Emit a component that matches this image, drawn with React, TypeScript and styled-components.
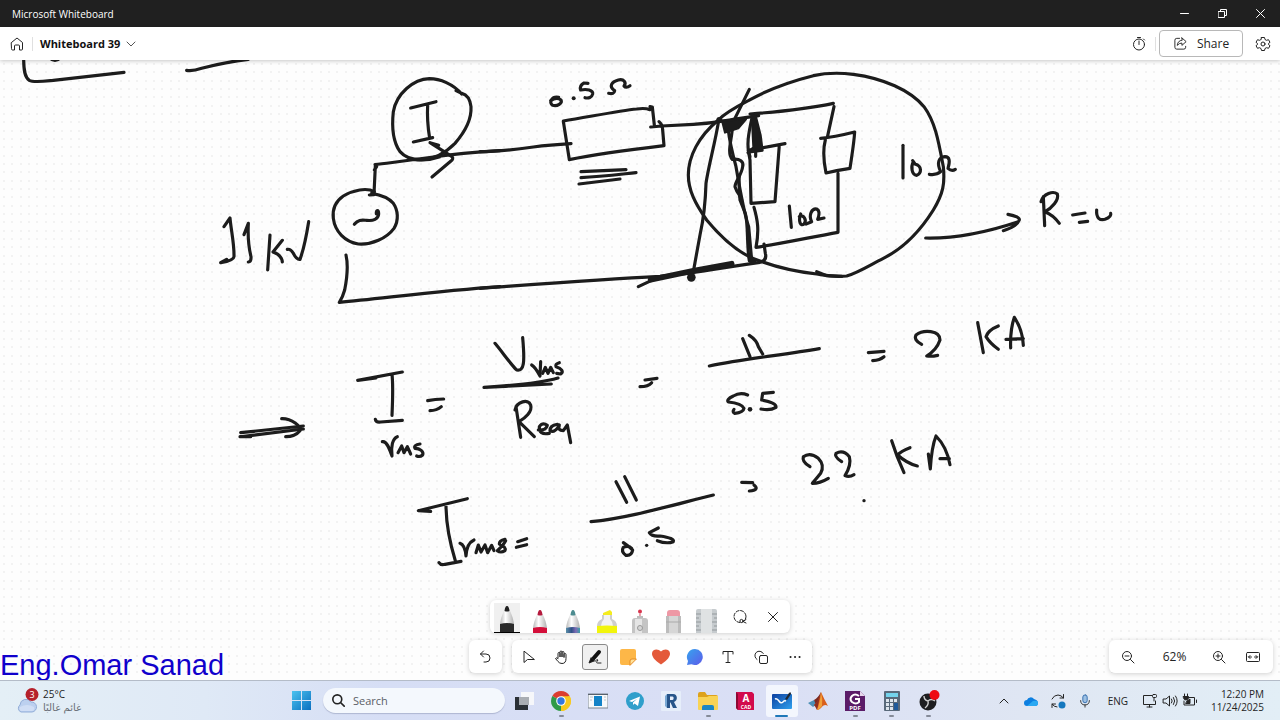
import React from "react";
import styled, { createGlobalStyle } from "styled-components";

const Global = createGlobalStyle`
  * { box-sizing: border-box; }
  body { margin: 0; font-family: "Open Sans", "Noto Sans", sans-serif; color: #242424; }
  button { font: inherit; color: inherit; border: 0; padding: 0; background: transparent; cursor: pointer; }
`;

const Page = styled.div`
  display: flex;
  flex-direction: column;
  min-height: 100vh;
  background: #fdfdfd;
`;

const TitleBar = styled.header`
  display: flex;
  align-items: center;
  justify-content: space-between;
  height: 27px;
  padding: 0 1px 0 12px;
  background: #202020;
  color: #fff;
  font-size: 10px;
`;

const WindowControls = styled.div`
  display: flex;
`;

const WindowButton = styled.button`
  display: grid;
  place-items: center;
  width: 38px;
  height: 27px;
`;

const AppBar = styled.nav`
  position: relative;
  display: flex;
  align-items: center;
  justify-content: space-between;
  height: 33px;
  padding: 0 9px;
  background: #fff;
  box-shadow: 0 1px 4px rgba(0, 0, 0, 0.22);
  z-index: 2;
`;

const BarGroup = styled.div<{ $gap: number }>`
  display: flex;
  align-items: center;
  gap: ${(p) => p.$gap}px;
`;

const IconButton = styled.button`
  display: grid;
  place-items: center;
  width: 16px;
  height: 24px;
`;

const Divider = styled.span`
  width: 1px;
  height: 14px;
  background: #e0e0e0;
`;

const BoardName = styled.button`
  display: flex;
  align-items: center;
  gap: 6px;
  font-size: 11px;
  font-weight: 700;
  color: #111;
`;

const ShareButton = styled.button`
  display: flex;
  align-items: center;
  justify-content: center;
  gap: 9px;
  width: 84px;
  height: 27px;
  border: 1px solid #b8b8b8;
  border-radius: 4px;
  font-size: 12px;
`;

const Board = styled.main`
  position: relative;
  display: flex;
  flex: 1;
  flex-direction: column;
  justify-content: flex-end;
  min-height: 400px;
  overflow: hidden;
`;

const Canvas = styled.svg`
  position: absolute;
  inset: 0;
  width: 100%;
  height: 100%;
`;

const Dock = styled.div`
  position: relative;
  display: grid;
  grid-template-columns: 1fr auto 1fr;
  align-items: end;
  padding-bottom: 7px;
`;

const Watermark = styled.div`
  align-self: end;
  font-family: "Liberation Sans", Arial, sans-serif;
  font-size: 29px;
  line-height: 30px;
  margin-bottom: -7px;
  color: #1000cc;
  white-space: nowrap;
`;

const ToolStack = styled.div`
  display: flex;
  flex-direction: column;
  align-items: center;
  gap: 7px;
`;

const ToolLine = styled.div`
  display: flex;
  gap: 10px;
`;

const Panel = styled.div<{ $width: number; $slots: number }>`
  display: grid;
  grid-template-columns: repeat(${(p) => p.$slots}, 1fr);
  width: ${(p) => p.$width}px;
  height: 33px;
  background: #fff;
  border-radius: 6px;
  box-shadow: 0 1px 5px rgba(0, 0, 0, 0.18);
`;

const ToolButton = styled.button<{ $active?: boolean }>`
  display: grid;
  place-items: center;
  place-self: center;
  width: 26px;
  height: 26px;
  border: 1px solid ${(p) => (p.$active ? "#8a8a8a" : "transparent")};
  border-radius: 3px;
  background: ${(p) => (p.$active ? "#f0f0f0" : "transparent")};
`;

const PenButton = styled.button<{ $active?: boolean }>`
  display: grid;
  place-items: end center;
  place-self: end center;
  width: 26px;
  height: 30px;
  background: ${(p) => (p.$active ? "#f0f0f0" : "transparent")};
  border-bottom: ${(p) => (p.$active ? "1px solid #000" : "0")};
`;

const ZoomPanel = styled.div`
  display: grid;
  grid-template-columns: 38px 1fr 34px 34px;
  align-items: center;
  justify-items: center;
  justify-self: end;
  width: 164px;
  height: 33px;
  margin-right: 7px;
  padding-right: 3px;
  background: #fff;
  border-radius: 6px;
  box-shadow: 0 1px 5px rgba(0, 0, 0, 0.18);
  font-size: 12px;
`;

const Taskbar = styled.footer`
  display: flex;
  align-items: center;
  height: 40px;
  border-top: 1px solid #b4bcc8;
  background: linear-gradient(90deg, #e4eff6 0%, #dfe9f6 16%, #d6def5 30%, #dadff5 60%, #dfe6f3 80%, #e2eef6 100%);
`;

const Weather = styled.button`
  display: flex;
  align-items: center;
  gap: 4px;
  flex: 0 0 283px;
  padding-left: 16px;
  text-align: left;
`;

const TwoLines = styled.span<{ $end?: boolean }>`
  display: flex;
  flex-direction: column;
  align-items: ${(p) => (p.$end ? "flex-end" : "flex-start")};
  font-size: 10px;
  line-height: 13px;
  white-space: nowrap;
`;

const Arabic = styled.span`
  font-family: "DejaVu Sans", sans-serif;
  color: #666c74;
`;

const StartButton = styled.button`
  display: grid;
  place-items: center;
  width: 37px;
  height: 32px;
  margin-right: 3px;
`;

const SearchBox = styled.label`
  display: flex;
  align-items: center;
  gap: 8px;
  width: 182px;
  height: 25px;
  padding: 0 9px;
  border-radius: 13px;
  background: #f4f8fd;
  box-shadow: 0 1px 1px rgba(80, 90, 130, 0.3);
`;

const SearchInput = styled.input`
  flex: 1;
  min-width: 0;
  padding: 0;
  border: 0;
  outline: 0;
  background: transparent;
  font: 11px "Open Sans", sans-serif;
  &::placeholder { color: #5a5e66; opacity: 1; }
`;

const Apps = styled.div`
  display: grid;
  grid-template-columns: repeat(12, 1fr);
  width: 441px;
  margin-left: 1px;
`;

const AppButton = styled.button<{ $state?: "open" | "focused" }>`
  position: relative;
  display: grid;
  place-items: center;
  place-self: center;
  width: 32px;
  height: 32px;
  border-radius: 3px;
  background: ${(p) => (p.$state === "focused" ? "#f3f6fd" : "transparent")};
  &::after {
    content: "";
    position: absolute;
    bottom: 0;
    width: ${(p) => (p.$state === "focused" ? 13 : 5)}px;
    height: 2px;
    border-radius: 1px;
    background: ${(p) => (p.$state === "focused" ? "#1f78b8" : p.$state ? "#858b98" : "transparent")};
  }
`;

const Tray = styled.div`
  display: flex;
  align-items: center;
  margin-left: auto;
  padding-right: 16px;
`;

const TrayButton = styled.button`
  display: grid;
  place-items: center;
  width: 27px;
  height: 30px;
`;

const Language = styled.button`
  width: 34px;
  margin: 0 7px 0 2px;
  font-size: 10px;
`;

const SystemStatus = styled.button`
  display: flex;
  align-items: center;
  gap: 4px;
  margin-right: 13px;
`;

/* Ink strokes, in sheets of three units to a pixel; x and y give the sheet's corner on the window. */
type Sheet = { x: number; y: number; ink: string[]; solid?: string[]; heavy?: string[]; dots?: [number, number, number][] };

const sheets: Sheet[] = [
  {
    x: 0,
    y: 0,
    ink: [
      "M71 176C71 210 74 232 88 241C100 248 130 244 160 241L372 217",
      "M156 179Q165 183 174 179",
      "M560 211C575 214 590 210 605 205C650 193 690 184 745 178",
    ],
  },
  {
    x: 200,
    y: 60,
    ink: [
      "M785 102C760 72 720 56 688 56C640 58 590 100 580 155C574 210 582 250 600 275C615 292 640 300 665 299C700 298 735 280 765 250C800 210 815 175 813 140C810 115 800 104 785 100L768 92",
      "M632 144L708 125M683 135C681 170 684 205 689 235M640 246L698 233",
      "M716 256L690 248L756 290Q762 296 752 304L696 351",
      "M525 314C570 308 640 300 700 291C760 282 830 276 900 272M640 298Q680 304 720 290",
      "M526 318L522 402M508 405L522 404M523 330L530 320",
      "M523 395C500 382 460 390 430 408C405 425 397 450 400 475C405 515 435 545 475 552C515 555 560 535 582 505C597 480 594 450 580 430C565 412 545 405 515 400",
      "M463 493C475 478 485 480 500 481C520 483 535 478 536 462C536 448 528 448 529 462",
      "M72 500L90 474C93 510 103 550 102 590Q101 602 62 608L80 598",
      "M132 524L145 490C143 530 148 570 153 590Q154 605 145 606",
      "M210 525L203 630M247 541L219 576Q245 585 247 606",
      "M262 568Q272 566 280 580Q290 600 300 598Q314 560 326 485",
      "M438 585C446 620 440 660 434 690Q428 712 418 727C550 715 720 692 900 680",
    ],
  },
  {
    x: 480,
    y: 60,
    ink: [
      "M0 275C60 275 110 268 160 261C200 256 240 253 273 251",
      "M250 184L268 299M250 183C330 170 420 152 470 147Q495 143 510 149M510 140L517 141L523 195M512 201L545 198M537 185Q548 195 548 210L552 257C460 268 360 280 268 299",
      "M545 198L640 193C700 190 720 184 760 178L836 167",
      "M236 112C215 108 205 128 218 136C232 140 248 130 243 120Q230 110 212 122",
      "M324 70L312 69Q298 76 302 90C320 86 340 90 338 102C336 112 325 116 315 113",
      "M386 100Q402 104 404 92C385 80 395 65 415 60C432 56 440 68 432 78Q438 86 450 77",
      "M303 335L438 329M303 353C360 350 410 344 468 338M297 372L420 357",
      "M716 182C705 250 685 320 678 370C676 440 670 480 660 525L640 635",
      "M475 680L515 661M0 685C180 672 360 658 540 649C650 640 740 620 840 607Q862 600 856 580L852 552",
      "M808 88L745 215",
      "M745 210C748 240 760 290 768 320C780 390 792 460 806 500L815 600",
      "M757 205C755 240 740 280 757 298C780 295 792 305 788 320C785 345 765 365 765 380Q770 395 778 405L785 420",
      "M778 345Q776 380 780 420L796 460C805 490 800 560 808 602L825 602",
    ],
    heavy: ["M512 659L640 632L755 611"],
    solid: ["M726 182L798 178L775 205L735 218Z"],
    dots: [[281, 115, 6], [634, 652, 13], [718, 180, 9], [814, 600, 9]],
  },
  {
    x: 670,
    y: 60,
    ink: [
      "M145 180C170 155 210 135 235 122C300 85 370 62 430 47C470 38 510 38 550 43C640 55 720 90 762 140C795 185 805 240 820 320C825 370 820 400 790 450C740 530 690 570 640 595C600 615 565 638 530 648C490 653 460 645 440 642C380 635 330 625 270 603C210 585 160 540 110 480C75 430 55 390 55 345C55 290 85 230 145 180",
      "M440 635L470 647L515 649",
      "M240 162C330 155 420 145 490 130M492 140L472 232M452 235C490 232 530 222 554 216C552 250 545 290 540 325Q505 330 468 339C460 300 458 270 466 240",
      "M504 340L504 517C420 532 340 550 258 562C268 510 263 480 252 442",
      "M235 272L240 300L243 430L315 425L328 255M235 271L345 251",
      "M248 165C235 220 228 260 240 290M257 275V289",
      "M699 256V354",
      "M730 305C722 320 725 345 740 346C755 340 757 318 735 312L728 302",
      "M778 343Q800 346 812 335C800 310 805 292 825 290C840 290 840 305 834 325Q845 335 856 328",
      "M358 438L364 502",
      "M392 462C384 485 392 500 402 492C412 480 400 462 388 470",
      "M408 492L425 485C415 465 425 445 440 447C450 452 448 465 443 478L462 474",
      "M767 534C850 536 940 520 1045 485M1014 463Q1050 470 1048 480Q1040 500 1000 512",
      "M1120 410L1124 497M1113 425C1120 400 1150 392 1162 402C1168 420 1145 445 1125 455Q1150 465 1168 490",
      "M1208 465Q1225 462 1245 459M1228 487L1253 484",
      "M1280 450C1278 475 1290 482 1305 478Q1325 470 1322 460",
    ],
    solid: ["M245 165L258 170L272 225L278 272L232 278L250 262Z"],
  },
  {
    x: 220,
    y: 310,
    ink: [
      "M62 368L250 348M66 380L250 357M60 380H92",
      "M185 326C215 325 245 350 240 362Q225 380 197 380",
      "M413 211L468 204M413 211L547 186M516 192C520 230 518 270 516 316M466 328Q468 338 482 336L547 331",
      "M623 272Q645 268 671 267M630 302Q650 302 664 290",
      "M487 395C500 392 508 415 516 438C512 410 518 385 532 380",
      "M534 428L545 408L552 428L562 410L572 432",
      "M600 402Q580 405 585 415C600 415 612 425 608 435Q600 442 590 438",
      "M825 100C850 130 870 160 890 180C912 184 915 160 908 83",
      "M935 165Q945 170 960 198L962 155",
      "M968 190L976 172L984 190L992 172L1000 188",
      "M1018 158Q1005 162 1008 170C1025 175 1032 185 1022 192L1010 190",
      "M792 232C860 228 950 222 1014 204M792 232L994 222",
      "M888 290L902 382M885 300C890 275 925 265 932 285C938 305 915 325 897 335L943 380",
      "M955 360Q978 362 982 346Q968 336 958 350Q956 376 988 370",
      "M1012 343Q990 346 990 362Q1002 370 1016 350",
      "M1018 345Q1012 362 1030 362L1042 345L1052 398",
      "M632 604L595 602L742 566M678 584C678 640 690 700 706 752M657 758Q662 766 675 763L723 754",
      "M720 700Q735 705 738 738Q740 700 762 690",
      "M768 728L775 705L783 726L795 705L803 728L815 706L822 722",
      "M855 688Q838 692 838 702Q860 712 855 722Q842 730 832 722Q850 705 857 692",
      "M893 695L920 686M889 712L920 704",
    ],
  },
  {
    x: 580,
    y: 310,
    ink: [
      "M195 210L231 205M180 230Q205 230 215 218",
      "M488 86L510 140M508 76Q530 90 535 110L548 132",
      "M388 168C500 145 610 135 718 116",
      "M503 255Q480 246 460 258Q438 268 445 276Q485 280 492 295Q490 308 464 310Q456 306 462 298",
      "M580 247L548 250L545 270Q590 278 588 292Q570 303 543 297",
      "M865 128L912 124M878 152Q900 150 912 140",
      "M1025 103Q1000 90 1008 75C1030 58 1080 60 1080 90Q1070 120 1040 138Q1055 140 1073 136",
      "M1193 38L1210 128M1255 48Q1225 60 1218 80Q1230 100 1255 118",
      "M1292 114Q1290 60 1303 22Q1328 60 1330 106M1278 88L1330 86",
      "M108 515L140 577M134 500L169 570",
      "M33 635C140 625 260 590 400 555",
      "M485 517L518 518M522 525Q540 540 508 543",
      "M690 470Q665 455 670 440Q690 425 715 445Q735 465 722 490Q710 505 697 520Q720 520 745 505",
      "M785 455Q762 440 768 430Q790 418 808 440Q815 465 795 497Q808 503 822 494",
      "M935 392Q950 440 972 488M990 413Q960 425 953 435Q980 460 1012 468",
      "M1045 432L1051 477Q1055 410 1068 378Q1100 410 1110 464M1080 446H1108",
      "M130 698Q150 712 158 720Q155 738 138 736Q122 725 130 712Q145 705 155 715",
      "M235 654L208 668Q215 680 240 678Q285 685 280 695Q260 703 232 692",
    ],
    dots: [[510, 298, 7], [852, 572, 5], [200, 706, 5]],
  },
];

const gridSteps = [4, 12, 21];

const Ink = () => (
  <Canvas role="img" aria-label="Short-circuit current worked example">
    <defs>
      <pattern id="dots" width="25" height="25" patternUnits="userSpaceOnUse">
        {gridSteps.map((x) => gridSteps.map((y) => <circle key={`${x}-${y}`} cx={x} cy={y} r="0.8" fill="#e3e3e3" />))}
      </pattern>
    </defs>
    <rect width="100%" height="100%" fill="url(#dots)" />
    <g transform="translate(0 -60)" stroke="#1c1c1c" fill="none" strokeLinecap="round" strokeLinejoin="round">
      {sheets.map((s) => (
        <g key={`${s.x}-${s.y}`} transform={`translate(${s.x} ${s.y}) scale(0.33333)`}>
          {s.ink.map((d) => <path key={d} d={d} strokeWidth="9.5" />)}
          {s.heavy?.map((d) => <path key={d} d={d} strokeWidth="17" />)}
          {s.solid?.map((d) => <path key={d} d={d} fill="#1c1c1c" strokeWidth="6" />)}
          {s.dots?.map(([x, y, r]) => <circle key={x} cx={x} cy={y} r={r} fill="#1c1c1c" stroke="none" />)}
        </g>
      ))}
    </g>
  </Canvas>
);

type LineProps = { size?: number; w?: number; box?: number; children: React.ReactNode };
const Line = ({ size = 16, w = 1, box = 16, children }: LineProps) => (
  <svg width={size} height={size} viewBox={`0 0 ${box} ${box}`} fill="none" stroke="currentColor" strokeWidth={w} strokeLinecap="round" strokeLinejoin="round" aria-hidden="true">
    {children}
  </svg>
);

const Pen = ({ tip, body, id, height = 23 }: { tip: string; body: string; id: string; height?: number }) => (
  <svg width="18" height={height} viewBox={`0 0 18 ${height}`} aria-hidden="true">
    <defs>
      <linearGradient id={id}>
        <stop offset="0" stopColor="#b8b8b8" />
        <stop offset="0.4" stopColor="#fff" />
        <stop offset="1" stopColor="#b0b0b0" />
      </linearGradient>
      <linearGradient id="galaxy">
        <stop offset="0" stopColor="#5b8fa8" />
        <stop offset="0.4" stopColor="#2f4f86" />
        <stop offset="0.7" stopColor="#7e6bb5" />
        <stop offset="1" stopColor="#39a0a8" />
      </linearGradient>
    </defs>
    <path d="M2 26V18C3 11 5 7 7 3H11C13 7 15 11 16 18V26Z" fill={`url(#${id})`} />
    <path d="M6.500 5C7 1 8 0 9 0S11 1 11.500 5Q9 6 6.500 5Z" fill={tip} />
    <path d="M2 18Q9 16 16 18V26H2Z" fill={body} />
  </svg>
);

const Highlighter = () => (
  <svg width="22" height="23" viewBox="0 0 22 23" aria-hidden="true">
    <path d="M7 6V3L14 0L16 2V6Z" fill="#f4ec1e" />
    <path d="M6 5H16V9Q21 11 21 16V23H1V16Q1 11 6 9Z" fill="#cecece" />
    <path d="M8 5H14V9Q17 12 17 16H5Q5 12 8 9Z" fill="#f3f3f3" />
    <path d="M1 16Q11 15 21 16V23H1Z" fill="#f2f50c" />
  </svg>
);

const Laser = () => (
  <svg width="18" height="24" viewBox="0 0 18 24" aria-hidden="true">
    <circle cx="9" cy="2.500" r="2" fill="#d8364f" />
    <path d="M8 4H10V8H8Z" fill="#eba4ae" />
    <path d="M6 7H12V11H6Z" fill="#bdbdbd" />
    <path d="M1 24V12Q1 9 4 9H14Q17 9 17 12V24Z" fill="#c4c4c4" />
    <path d="M4 10H11V24H4Z" fill="#e5e5e5" />
    <circle cx="9" cy="19" r="2.500" fill="#d5d5d5" stroke="#999" />
  </svg>
);

const Eraser = () => (
  <svg width="16" height="23" viewBox="0 0 16 23" aria-hidden="true">
    <path d="M2 8V3Q2 0 5 0H12Q15 0 15 3V8Z" fill="#ee98a5" />
    <path d="M1 6H16V23H1Z" fill="#bcbcbc" />
    <path d="M4 6H13V23H4Z" fill="#d6d6d6" />
    <path d="M1 12H16" stroke="#aaa" />
  </svg>
);

const Ruler = () => (
  <svg width="23" height="24" viewBox="0 0 23 24" aria-hidden="true">
    <path d="M1 24V2Q1 0 3 0H20Q22 0 22 2V24Z" fill="#c6cbce" />
    <path d="M6 0H17V24H6Z" fill="#dfe2e3" />
    <path d="M1 5H6M1 9H4M1 13H6M1 17H4M1 21H6M22 5H17M22 9H19M22 13H17M22 17H19M22 21H17" stroke="#92989b" />
  </svg>
);

const CloudWeather = () => (
  <svg width="23" height="26" viewBox="0 0 23 26" aria-hidden="true">
    <path d="M5 24A4 4 0 0 1 4 17A6 6 0 0 1 15 14A5 5 0 0 1 16 24Z" fill="#bcd0ef" stroke="#93aed8" />
    <path d="M5 23A3 3 0 0 1 4 19Q11 15 18 19Q19 22 16 23Z" fill="#d0def5" />
    <circle cx="16" cy="6.500" r="6.500" fill="#b5202a" />
    <text x="16" y="10" textAnchor="middle" fontSize="9" fill="#fff">3</text>
  </svg>
);

const Icon20 = ({ children }: { children: React.ReactNode }) => (
  <svg width="20" height="20" viewBox="0 0 20 20" aria-hidden="true">{children}</svg>
);

const TaskView = () => (
  <Icon20>
    <path d="M7 1H20V14H7Z" fill="#f6f7fa" />
    <path d="M1 6H14V19H1Z" fill="#2b3036" />
    <path d="M5 6H15V14H5Z" fill="#a9adb3" />
  </Icon20>
);

const Chrome = () => (
  <Icon20>
    <path d="M10 10L1.340 5A10 10 0 0 1 18.660 5Z" fill="#dc3d30" />
    <path d="M10 10L18.660 5A10 10 0 0 1 10 20Z" fill="#f8c91e" />
    <path d="M10 10L10 20A10 10 0 0 1 1.340 5Z" fill="#2f9a48" />
    <path d="M10 5.200H18.700A10 10 0 0 1 10 20L14.200 12.400Z" fill="#f8c91e" />
    <circle cx="10" cy="10" r="4.800" fill="#fff" />
    <circle cx="10" cy="10" r="3.700" fill="#3478df" />
  </Icon20>
);

const Gadget = () => (
  <Icon20>
    <path d="M0 3H20V17H0Z" fill="#f7f9fb" stroke="#7a8591" />
    <path d="M0 3H20V4H0Z" fill="#59626d" />
    <path d="M6 5H14V15H6Z" fill="#1483c7" />
    <path d="M2 6H5M2 9H4M16 6H18M16 9H18" stroke="#bcc4cc" />
  </Icon20>
);

const Telegram = () => (
  <Icon20>
    <circle cx="10" cy="10" r="9" fill="#2f9fcb" />
    <path d="M4 10L15 5.500L13 15L9.500 12.500L8 14V11.500L12 8L7 11Z" fill="#fff" />
  </Icon20>
);

const Revit = () => (
  <Icon20>
    <rect width="20" height="20" rx="1" fill="#e6eefa" />
    <path d="M6 3H12C17 3 17 10 13 11L16 17H12L9.500 11.500H9V17H6ZM9 5.500V9H11.500C13 9 13 5.500 11.500 5.500Z" fill="#27558a" fillRule="evenodd" />
    <path d="M4 5L6 3V17L4 15Z" fill="#79a9d4" />
  </Icon20>
);

const Folder = () => (
  <svg width="22" height="20" viewBox="0 0 22 20" aria-hidden="true">
    <path d="M1 3Q1 1 3 1H8L10 4H19Q21 4 21 6V18H1Z" fill="#dda21c" />
    <path d="M1 6H10L12 5H21V18Q21 19 20 19H2Q1 19 1 18Z" fill="#f8d355" />
    <path d="M5 19V16Q5 14 7 14H15Q17 14 17 16V19Z" fill="#1a86c4" />
  </svg>
);

const AutoCad = () => (
  <Icon20>
    <path d="M1 1H17L19 3V19H3L1 17Z" fill="#d20b4c" />
    <path d="M1 1L3 3V19L1 17Z" fill="#8c0833" />
    <text x="11" y="11" textAnchor="middle" fontSize="10" fontWeight="700" fill="#fff">A</text>
    <text x="11" y="18" textAnchor="middle" fontSize="5" fontWeight="700" fill="#fff">CAD</text>
  </Icon20>
);

const WhiteboardApp = () => (
  <svg width="22" height="20" viewBox="0 0 22 20" aria-hidden="true">
    <defs>
      <linearGradient id="wb" x2="1" y2="1">
        <stop offset="0" stopColor="#0c3f9f" />
        <stop offset="1" stopColor="#2fa0ee" />
      </linearGradient>
    </defs>
    <rect x="1" y="3" width="20" height="15" rx="1" fill="url(#wb)" />
    <path d="M4 8Q6 7 8 10T12 11Q13 9 15 10" stroke="#fff" strokeWidth="1.500" fill="none" />
    <path d="M14 8L18 2Q20 0 20 3L16 9Z" fill="#202833" />
  </svg>
);

const Matlab = () => (
  <Icon20>
    <path d="M0 12L6 9L9 13L5 16Z" fill="#4c8fb5" />
    <path d="M6 9Q10 7 13 1L11 12L8 14Z" fill="#7a2a22" />
    <path d="M13 1Q16 8 20 15Q16 12 13 17Q11 19 9 19Q9 15 6 14Q10 12 13 1Z" fill="#d95f1c" />
    <path d="M13 1Q11 10 9 19Q7 15 6 14Q10 11 13 1Z" fill="#8f2f20" />
    <path d="M13 1Q15 8 14 15Q12 18 9 19Q12 12 13 1Z" fill="#f0a13a" />
  </Icon20>
);

const Pdf = () => (
  <Icon20>
    <path d="M0 0H15L20 5V20H0Z" fill="#5b1c68" />
    <path d="M15 0V5H20Z" fill="#e7d7ec" />
    <path d="M14 5Q10 2 7 5T7 11Q11 14 14 11V8H10" stroke="#fff" strokeWidth="2" fill="none" />
    <text x="10" y="19" textAnchor="middle" fontSize="6" fontWeight="700" fill="#fff">PDF</text>
  </Icon20>
);

const Calculator = () => (
  <Icon20>
    <rect x="2" y="0" width="16" height="20" rx="1" fill="#59697a" />
    <rect x="4" y="2" width="12" height="4" fill="#74d3ec" />
    {[8, 12, 16].map((y) => [4, 8, 12].map((x) => <rect key={`${x}-${y}`} x={x} y={y} width="3" height="3" fill="#dce4ec" />))}
    <rect x="12" y="12" width="4" height="7" fill="#1e5a9a" />
  </Icon20>
);

const Obs = () => (
  <svg width="22" height="22" viewBox="0 0 22 22" aria-hidden="true">
    <circle cx="10" cy="12" r="8.500" fill="#1e1e20" />
    <path d="M10 11Q6 10 6 6M10 11Q13 8 17 11M10 11Q11 15 7 18" stroke="#d0d0d0" strokeWidth="1.400" fill="none" />
    <circle cx="16.500" cy="5" r="5" fill="#ee0b12" />
  </svg>
);

const apps: { name: string; icon: React.ReactNode; state?: "open" | "focused" }[] = [
  { name: "Task view", icon: <TaskView /> },
  { name: "Chrome", icon: <Chrome />, state: "open" },
  { name: "Desktop gadget", icon: <Gadget /> },
  { name: "Telegram", icon: <Telegram /> },
  { name: "Revit", icon: <Revit /> },
  { name: "File Explorer", icon: <Folder />, state: "open" },
  { name: "AutoCAD", icon: <AutoCad /> },
  { name: "Whiteboard", icon: <WhiteboardApp />, state: "focused" },
  { name: "MATLAB", icon: <Matlab /> },
  { name: "PDF", icon: <Pdf />, state: "open" },
  { name: "Calculator", icon: <Calculator />, state: "open" },
  { name: "OBS Studio", icon: <Obs />, state: "open" },
];

const tools: { name: string; icon: React.ReactNode; active?: boolean }[] = [
  { name: "Select", icon: <Line><path d="M4 2.500V13.500L7.500 10.500H14Z" /></Line> },
  {
    name: "Pan",
    icon: <Line><path d="M5 9V4.500A1 1 0 0 1 7 4.500V8V3A1 1 0 0 1 9 3V8V3.500A1 1 0 0 1 11 3.500V8.500V5.500A1 1 0 0 1 13 5.500V9.500Q13 14.500 9 14.500Q6.500 14.500 5 12.500L2.500 9.500Q3.500 8 5 9.500" /></Line>,
  },
  {
    name: "Ink",
    active: true,
    icon: <Line><path d="M12 3L5.500 10.500" strokeWidth="4" stroke="#111" /><path d="M4 9L2 14L7 12Z" fill="#111" /><path d="M8 12.500Q10 9.500 11 11Q8.500 14 10.500 14H14" /></Line>,
  },
  {
    name: "Sticky note",
    icon: <Line size={18} box={18}><path d="M3 1H15Q17 1 17 3V11L11 17H3Q1 17 1 15V3Q1 1 3 1Z" fill="#fdb748" stroke="none" /><path d="M11 17V13Q11 11 13 11H17Z" fill="#ffe29a" stroke="#e58a23" /></Line>,
  },
  {
    name: "Reactions",
    icon: <Line size={18} box={18}><path d="M9 16.500C2 12 0 8.500 0 5.500C0 1 6 0 9 3.500C12 0 18 1 18 5.500C18 8.500 16 12 9 16.500Z" fill="#e4593a" stroke="none" /></Line>,
  },
  {
    name: "Comment",
    icon: (
      <Line size={18} box={18}>
        <defs><linearGradient id="bubble" x2="1" y2="1"><stop offset="0" stopColor="#36a3ee" /><stop offset="1" stopColor="#5d5bea" /></linearGradient></defs>
        <path d="M9 1A8 8 0 1 1 5.500 16.300L1 17L2 13A8 8 0 0 1 9 1Z" fill="url(#bubble)" stroke="none" />
      </Line>
    ),
  },
  { name: "Text", icon: <Line><path d="M3 5V2.500H13V5M8 2.500V13.500M6 13.500H10" /></Line> },
  { name: "Shapes", icon: <Line><path d="M4 10.500A4.500 4.500 0 1 1 10.300 4.500" /><rect x="6.500" y="6.500" width="8" height="8" rx="1.500" /></Line> },
  { name: "More", icon: <Line><path d="M3.500 8H3.600M8 8H8.100M12.500 8H12.600" strokeWidth="2" /></Line> },
];

const pens: { name: string; icon: React.ReactNode; active?: boolean }[] = [
  { name: "Black pen", icon: <Pen id="p1" tip="#222" body="#292929" height={26} />, active: true },
  { name: "Red pen", icon: <Pen id="p2" tip="#b51a3d" body="#d40f3a" /> },
  { name: "Galaxy pen", icon: <Pen id="p3" tip="#4d8c90" body="url(#galaxy)" /> },
  { name: "Highlighter", icon: <Highlighter /> },
  { name: "Laser pointer", icon: <Laser /> },
  { name: "Eraser", icon: <Eraser /> },
  { name: "Ruler", icon: <Ruler /> },
];

export default function App() {
  return (
    <Page>
      <Global />
      <TitleBar>
        <span>Microsoft Whiteboard</span>
        <WindowControls>
          <WindowButton aria-label="Minimize"><Line size={9} box={9}><path d="M0.500 4.500H8.500" /></Line></WindowButton>
          <WindowButton aria-label="Restore"><Line size={9} box={9}><path d="M0.500 2.500H6.500V8.500H0.500ZM2.500 2.500V0.500H8.500V6.500H6.500" /></Line></WindowButton>
          <WindowButton aria-label="Close"><Line size={9} box={9}><path d="M0.500 0.500L8.500 8.500M8.500 0.500L0.500 8.500" /></Line></WindowButton>
        </WindowControls>
      </TitleBar>
      <AppBar>
        <BarGroup $gap={7}>
          <IconButton aria-label="Home"><Line><path d="M2.500 6.500L8 2L13.500 6.500V13Q13.500 14 12.500 14H10.500V10Q10.500 9 9.500 9H6.500Q5.500 9 5.500 10V14H3.500Q2.500 14 2.500 13Z" /></Line></IconButton>
          <Divider />
          <BoardName>
            Whiteboard 39
            <Line size={10} box={10}><path d="M1 3L5 7L9 3" stroke="#555" /></Line>
          </BoardName>
        </BarGroup>
        <BarGroup $gap={12}>
          <BarGroup $gap={3}>
            <BarGroup $gap={8}>
              <IconButton aria-label="Timer"><Line><circle cx="8" cy="8.500" r="5.500" /><path d="M8 5V8.500M6.500 1.500H9.500M12.500 3L13.500 4" /></Line></IconButton>
              <Divider />
            </BarGroup>
            <ShareButton>
              <Line size={15}><path d="M7 2.500H4Q2 2.500 2 4.500V12Q2 14 4 14H11.500Q13.500 14 13.500 12V11M9.500 2L14 6L9.500 10V7.500Q6.500 7.500 4.500 10Q5 5 9.500 4.500Z" /></Line>
              Share
            </ShareButton>
          </BarGroup>
          <IconButton aria-label="Settings">
            <Line><path d="M6.500 1.500H9.500L10 3.500L11.500 4.300L13.500 3.700L15 6.300L13.500 7.500V8.500L15 9.700L13.500 12.300L11.500 11.700L10 12.500L9.500 14.500H6.500L6 12.500L4.500 11.700L2.500 12.300L1 9.700L2.500 8.500V7.500L1 6.300L2.500 3.700L4.500 4.300L6 3.500Z" /><circle cx="8" cy="8" r="2" /></Line>
          </IconButton>
        </BarGroup>
      </AppBar>
      <Board>
        <Ink />
        <Dock>
          <Watermark>Eng.Omar Sanad</Watermark>
          <ToolStack>
            <Panel $width={300} $slots={9}>
              {pens.map((p) => <PenButton key={p.name} aria-label={p.name} $active={p.active}>{p.icon}</PenButton>)}
              <ToolButton aria-label="Lasso select"><Line><circle cx="8" cy="7.500" r="6" strokeDasharray="3 1.700" /><circle cx="9.500" cy="12" r="1.600" fill="#fff" /><path d="M11 12.500L14 10.500M11 12.500L14 14" /></Line></ToolButton>
              <ToolButton aria-label="Close pens"><Line><path d="M3.500 3.500L12.500 12.500M12.500 3.500L3.500 12.500" /></Line></ToolButton>
            </Panel>
            <ToolLine>
              <Panel $width={33} $slots={1}>
                <ToolButton aria-label="Undo"><Line><path d="M6.500 2L3.500 5L6.500 8M3.500 5H9A4 4 0 0 1 9 13H7" /></Line></ToolButton>
              </Panel>
              <Panel $width={300} $slots={9}>
                {tools.map((t) => <ToolButton key={t.name} aria-label={t.name} $active={t.active}>{t.icon}</ToolButton>)}
              </Panel>
            </ToolLine>
          </ToolStack>
          <ZoomPanel>
            <ToolButton aria-label="Zoom out"><Line><circle cx="7" cy="7" r="4.500" /><path d="M5 7H9M10.500 10.500L14 14" /></Line></ToolButton>
            <span>62%</span>
            <ToolButton aria-label="Zoom in"><Line><circle cx="7" cy="7" r="4.500" /><path d="M5 7H9M7 5V9M10.500 10.500L14 14" /></Line></ToolButton>
            <ToolButton aria-label="Fit to screen"><Line><rect x="1.500" y="3.500" width="13" height="9" rx="1" /><path d="M6.500 8H3.500L5 6.500M3.500 8L5 9.500M9.500 8H12.500L11 6.500M12.500 8L11 9.500" /></Line></ToolButton>
          </ZoomPanel>
        </Dock>
      </Board>
      <Taskbar>
        <Weather>
          <CloudWeather />
          <TwoLines>
            <span>25°C</span>
            <Arabic lang="ar" dir="rtl">غائم غالبًا</Arabic>
          </TwoLines>
        </Weather>
        <StartButton aria-label="Start">
          <svg width="20" height="20" viewBox="0 0 20 20" aria-hidden="true">
            <defs><linearGradient id="win" x2="1" y2="1"><stop offset="0" stopColor="#4cc3ef" /><stop offset="1" stopColor="#0a6fc0" /></linearGradient></defs>
            <path d="M0 0H9V9H0ZM10 0H19V9H10ZM0 10H9V19H0ZM10 10H19V19H10Z" fill="url(#win)" />
          </svg>
        </StartButton>
        <SearchBox>
          <Line size={13} w={2}><circle cx="6.500" cy="6.500" r="5.500" /><path d="M10.500 10.500L15 15" /></Line>
          <SearchInput aria-label="Search" placeholder="Search" />
        </SearchBox>
        <Apps>
          {apps.map((a) => <AppButton key={a.name} aria-label={a.name} $state={a.state}>{a.icon}</AppButton>)}
        </Apps>
        <Tray>
          <TrayButton aria-label="Hidden icons"><Line size={10} box={10} w={1}><path d="M1 7L5 3L9 7" /></Line></TrayButton>
          <TrayButton aria-label="OneDrive">
            <svg width="14" height="10" viewBox="0 0 14 10" aria-hidden="true"><path d="M3 10A3 3 0 0 1 3 4A4 4 0 0 1 10 3Q14 4 14 7T11 10Z" fill="#0d7fe0" /><path d="M3 10L9 5Q14 4 14 7T11 10Z" fill="#2aa8f2" /></svg>
          </TrayButton>
          <TrayButton aria-label="Windows Update"><Line><path d="M2 6Q4 2 8 2Q11 2 13.500 5M13.500 1.500V5H10M2 14.500V11H5.500M2 11Q4 14 7 14" /><circle cx="12" cy="12" r="3.500" fill="#1477be" stroke="none" /></Line></TrayButton>
          <TrayButton aria-label="Microphone"><Line size={14}><rect x="5.500" y="1" width="5" height="9" rx="2.500" stroke="#2a66a8" fill="#9cc0e4" /><path d="M3 7.500Q3 12.500 8 12.500T13 7.500M8 12.500V15" /></Line></TrayButton>
          <Language>ENG</Language>
          <SystemStatus aria-label="Network, volume and battery">
            <Line><path d="M10 2.500H1.500V11.500H13.500V8M5 14H10M7.500 11.500V14M12 4.500V8" /><rect x="10.500" y="1.500" width="4" height="3" rx="1" /></Line>
            <Line><path d="M1.500 6H4L7.500 3V13L4 10H1.500ZM9.500 6Q11 8 9.500 10M11.500 4.500Q14 8 11.500 11.500M13.500 3Q17 8 13.500 13" /></Line>
            <Line><path d="M7 4.500H12.500V12H2V8M14.500 7V9.500M2.500 1V3M5.500 1V3" /><path d="M1.500 3.500H6.500V5Q6 7 4 7T1.500 5ZM5 8L8 6V10.500H4Z" fill="#242424" /></Line>
          </SystemStatus>
          <TwoLines $end>
            <span>12:20 PM</span>
            <span>11/24/2025</span>
          </TwoLines>
        </Tray>
      </Taskbar>
    </Page>
  );
}
